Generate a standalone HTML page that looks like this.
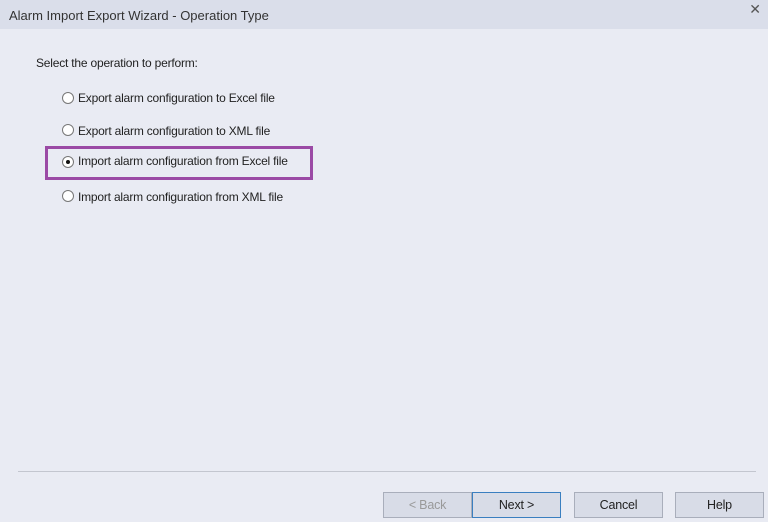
<!DOCTYPE html><html><head><style>
body{margin:0;width:768px;height:522px;background:#e9ebf3;font-family:"Liberation Sans",sans-serif;position:relative;overflow:hidden;color:#222}
.t{position:absolute;left:0;top:0;width:768px;height:29px;background:#dadeea;}
.t span{position:absolute;left:9px;top:8px;font-size:13px;color:#333}
.x{position:absolute;right:7px;top:1px;font-size:14px;color:#555}
.a{position:absolute;font-size:12px;letter-spacing:-0.2px}
.r{position:absolute;width:10px;height:10px;border:1px solid #777;border-radius:50%;background:#fff}
.b{position:absolute;top:492px;height:24px;width:87px;border:1px solid #a9aebb;background:#d8dce7;font-size:12.5px;letter-spacing:-0.2px;text-align:center;line-height:24px;box-sizing:content-box}
</style></head><body>
<div class="t"><span>Alarm Import Export Wizard - Operation Type</span><div class="x">✕</div></div>
<div class="a" style="left:36px;top:56px">Select the operation to perform:</div>
<div class="r" style="left:62px;top:92px"></div><div class="a" style="left:78px;top:91px">Export alarm configuration to Excel file</div>
<div class="r" style="left:62px;top:124px"></div><div class="a" style="left:78px;top:124px">Export alarm configuration to XML file</div>
<div class="r" style="left:62px;top:156px"><div style="width:4px;height:4px;background:#111;border-radius:50%;margin:3px"></div></div><div class="a" style="left:78px;top:154px">Import alarm configuration from Excel file</div>
<div style="position:absolute;left:45px;top:146px;width:262px;height:28px;border:3px solid #9b4aa5"></div>
<div class="r" style="left:62px;top:190px"></div><div class="a" style="left:78px;top:190px">Import alarm configuration from XML file</div>
<div style="position:absolute;left:18px;top:471px;width:738px;height:1px;background:#c3c6cf"></div>
<div class="b" style="left:383px;color:#999">&lt; Back</div>
<div class="b" style="left:472px;border-color:#3a7fc0">Next &gt;</div>
<div class="b" style="left:574px">Cancel</div>
<div class="b" style="left:675px">Help</div>
</body></html>
